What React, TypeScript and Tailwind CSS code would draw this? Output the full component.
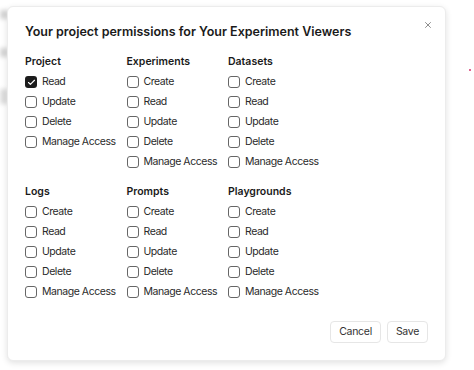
import { Check, X } from "lucide-react";

type Group = { name: string; perms: string[]; checked?: string[] };

const ALL = ["Create", "Read", "Update", "Delete", "Manage Access"];

const topRow: Group[] = [
  { name: "Project", perms: ["Read", "Update", "Delete", "Manage Access"], checked: ["Read"] },
  { name: "Experiments", perms: ALL },
  { name: "Datasets", perms: ALL },
];

const bottomRow: Group[] = [
  { name: "Logs", perms: ALL },
  { name: "Prompts", perms: ALL },
  { name: "Playgrounds", perms: ALL },
];

function Box({ checked }: { checked?: boolean }) {
  if (checked) {
    return (
      <span className="flex h-[12px] w-[12px] shrink-0 items-center justify-center rounded-[3px] bg-[#1c1c1c]">
        <Check size={9} strokeWidth={3} className="text-white" />
      </span>
    );
  }
  return <span className="h-[12px] w-[12px] shrink-0 rounded-[3px] border border-[#666] bg-white" />;
}

function Column({ group }: { group: Group }) {
  return (
    <div className="flex w-[101.5px] flex-col">
      <div className="flex h-5 items-center text-[10.5px] font-semibold text-[#1a1a1a]">{group.name}</div>
      {group.perms.map((p) => (
        <label
          key={p}
          className="flex h-5 items-center gap-[5px] whitespace-nowrap text-[10.5px] tracking-[-0.45px] text-[#2a2a2a]"
        >
          <Box checked={group.checked?.includes(p)} />
          {p}
        </label>
      ))}
    </div>
  );
}

export default function App() {
  return (
    <div className="relative h-[370px] w-[474px] overflow-hidden bg-white font-['Inter',sans-serif]">
      {/* blurred page content behind the dialog */}
      <div className="absolute left-0 top-[10px] h-[9px] w-[8px] bg-[#d4d4d4] blur-[2px]" />
      <div className="absolute left-0 top-[48px] h-[9px] w-[8px] bg-[#d4d4d4] blur-[2px]" />
      <div className="absolute left-0 top-[89px] h-[15px] w-[8px] bg-[#dcdcdc] blur-[2px]" />
      <div className="absolute left-[469px] top-[69px] h-[2px] w-[2px] rounded-full bg-[#d6336c]" />

      <div className="relative ml-[7px] mt-[6px] flex h-[355px] w-[439px] flex-col rounded-[6px] border border-[#ececec] bg-white px-[17px] pb-[17px] pt-[15px] shadow-[0_2px_6px_rgba(0,0,0,0.12)]">
        <button className="absolute right-[12px] top-[13px] text-[#777]">
          <X size={10} strokeWidth={2} />
        </button>
        <h2 className="text-[12.5px] font-semibold leading-5 text-[#1a1a1a]">
          Your project permissions for Your Experiment Viewers
        </h2>

        <div className="mt-[10px] flex">
          {topRow.map((g) => (
            <Column key={g.name} group={g} />
          ))}
        </div>
        <div className="mt-[10px] flex">
          {bottomRow.map((g) => (
            <Column key={g.name} group={g} />
          ))}
        </div>

        <div className="mt-auto flex justify-end gap-[6px]">
          <button className="h-[22px] rounded-[4px] border border-[#e6e6e6] px-[8px] text-[10.5px] tracking-[-0.3px] text-[#333]">
            Cancel
          </button>
          <button className="h-[22px] rounded-[4px] border border-[#e6e6e6] px-[8px] text-[10.5px] tracking-[-0.3px] text-[#333]">
            Save
          </button>
        </div>
      </div>
    </div>
  );
}
